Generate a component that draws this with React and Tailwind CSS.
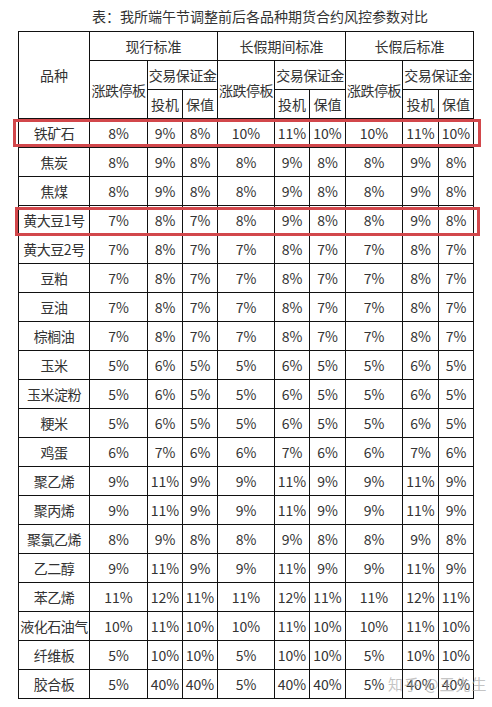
import React from 'react';

const rows = [
  ['铁矿石', [8, 9, 8], [10, 11, 10], [10, 11, 10]],
  ['焦炭', [8, 9, 8], [8, 9, 8], [8, 9, 8]],
  ['焦煤', [8, 9, 8], [8, 9, 8], [8, 9, 8]],
  ['黄大豆1号', [7, 8, 7], [8, 9, 8], [8, 9, 8]],
  ['黄大豆2号', [7, 8, 7], [7, 8, 7], [7, 8, 7]],
  ['豆粕', [7, 8, 7], [7, 8, 7], [7, 8, 7]],
  ['豆油', [7, 8, 7], [7, 8, 7], [7, 8, 7]],
  ['棕榈油', [7, 8, 7], [7, 8, 7], [7, 8, 7]],
  ['玉米', [5, 6, 5], [5, 6, 5], [5, 6, 5]],
  ['玉米淀粉', [5, 6, 5], [5, 6, 5], [5, 6, 5]],
  ['粳米', [5, 6, 5], [5, 6, 5], [5, 6, 5]],
  ['鸡蛋', [6, 7, 6], [6, 7, 6], [6, 7, 6]],
  ['聚乙烯', [9, 11, 9], [9, 11, 9], [9, 11, 9]],
  ['聚丙烯', [9, 11, 9], [9, 11, 9], [9, 11, 9]],
  ['聚氯乙烯', [8, 9, 8], [8, 9, 8], [8, 9, 8]],
  ['乙二醇', [9, 11, 9], [9, 11, 9], [9, 11, 9]],
  ['苯乙烯', [11, 12, 11], [11, 12, 11], [11, 12, 11]],
  ['液化石油气', [10, 11, 10], [10, 11, 10], [10, 11, 10]],
  ['纤维板', [5, 10, 10], [5, 10, 10], [5, 10, 10]],
  ['胶合板', [5, 40, 40], [5, 40, 40], [5, 40, 40]],
];

const groups = ['现行标准', '长假期间标准', '长假后标准'];
const widths = [71, 58, 35, 35, 57, 35, 36, 57, 36, 35];

const cell = 'border border-[#111] p-0 text-center align-middle whitespace-nowrap';

export default function App() {
  return (
    <div
      className="relative w-[492px] h-[707px] bg-white text-[#333] text-[14px] overflow-hidden"
      style={{ fontFamily: '"Noto Sans CJK SC", "Noto Sans", sans-serif' }}
    >
      {/* title */}
      <div className="h-[31px] flex items-center pl-[92px] leading-none">
        表：我所端午节调整前后各品种期货合约风控参数对比
      </div>

      <div className="pl-[18px]">
        <table className="table-fixed border-collapse w-[455px] leading-none">
          <colgroup>
            {widths.map((w, i) => (
              <col key={i} style={{ width: w }} />
            ))}
          </colgroup>
          <thead>
            <tr className="h-[29px]">
              <th rowSpan={3} className={`${cell} font-normal`}>品种</th>
              {groups.map((g) => (
                <th key={g} colSpan={3} className={`${cell} font-normal`}>{g}</th>
              ))}
            </tr>
            <tr className="h-[29px]">
              {groups.map((g) => (
                <React.Fragment key={g}>
                  <th rowSpan={2} className={`${cell} font-normal tracking-[-0.5px]`}>涨跌停板</th>
                  <th colSpan={2} className={`${cell} font-normal tracking-[-0.5px]`}>交易保证金</th>
                </React.Fragment>
              ))}
            </tr>
            <tr className="h-[29px]">
              {groups.map((g) => (
                <React.Fragment key={g}>
                  <th className={`${cell} font-normal`}>投机</th>
                  <th className={`${cell} font-normal`}>保值</th>
                </React.Fragment>
              ))}
            </tr>
          </thead>
          <tbody>
            {rows.map(([name, a, b, c]) => (
              <tr key={name} className="h-[29px]">
                <td className={`${cell} tracking-[-0.5px]`}>{name}</td>
                {[...a, ...b, ...c].map((v, i) => (
                  <td key={i} className={cell}>{v}%</td>
                ))}
              </tr>
            ))}
          </tbody>
        </table>
      </div>

      {/* red highlight boxes */}
      <div className="absolute left-[13px] top-[119px] w-[468px] h-[28px] border-[3px] border-[#d2474b]" />
      <div className="absolute left-[15px] top-[207px] w-[465px] h-[29px] border-[3px] border-[#d2474b]" />

      {/* watermark */}
      <div className="absolute left-[388px] top-[676px] text-[15px] leading-none text-[#aaa]/70 tracking-[1px]">
        知乎 @王先生
      </div>
    </div>
  );
}
